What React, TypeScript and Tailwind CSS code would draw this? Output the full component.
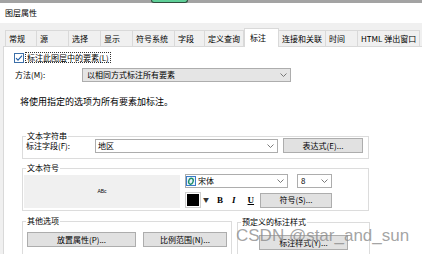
import type { ReactNode } from 'react';

type Tab = { label: string; width: string; active?: boolean };

const tabs: Tab[] = [
  { label: '常规', width: 'w-[32px]' },
  { label: '源', width: 'w-[32px]' },
  { label: '选择', width: 'w-[32px]' },
  { label: '显示', width: 'w-[32px]' },
  { label: '符号系统', width: 'w-[42px]' },
  { label: '字段', width: 'w-[30px]' },
  { label: '定义查询', width: 'w-[39px]' },
  { label: '标注', width: 'w-[35px]', active: true },
  { label: '连接和关联', width: 'w-[47px]' },
  { label: '时间', width: 'w-[32px]' },
  { label: 'HTML 弹出窗口', width: 'w-[62px]' },
];

function Chevron() {
  return (
    <svg viewBox="0 0 7 4" className="h-[4px] w-[7px]" aria-hidden="true">
      <path d="M0.5 0.5l3 3 3-3" fill="none" stroke="#6b6b6b" strokeWidth="0.9" />
    </svg>
  );
}

function Button({ children, className }: { children: ReactNode; className: string }) {
  return (
    <div
      className={`flex h-[15px] items-center justify-center border border-[#adadad] bg-[#e1e1e1] leading-[12px] ${className}`}
    >
      {children}
    </div>
  );
}

function Group({ label, className, children }: { label: string; className: string; children: ReactNode }) {
  return (
    <div className={`relative border border-[#dcdcdc] ${className}`}>
      <span className="absolute -top-[6px] left-[3px] bg-white px-px leading-[9px]">{label}</span>
      {children}
    </div>
  );
}

function FontIcon() {
  return (
    <svg viewBox="0 0 10 10" className="h-[10px] w-[10px]" aria-hidden="true">
      <rect x="0.5" y="0.5" width="9" height="9" fill="#eaf3fb" stroke="#3b7bc8" />
      <ellipse cx="5" cy="5.2" rx="2.2" ry="3" fill="none" stroke="#1d8f6a" strokeWidth="1.4" transform="rotate(18 5 5)" />
    </svg>
  );
}

export default function App() {
  return (
    <div className="relative flex h-[254px] w-[422px] flex-col overflow-hidden bg-white font-['Noto_Sans_CJK_SC',sans-serif] text-[8px] text-black">
      {/* window edge behind the dialog */}
      <div className="flex h-[3px] shrink-0 bg-[#a3a3a3]">
        <div className="ml-[151px] h-[3px] w-[37px] rounded-b-[3px] border-x border-b border-[#2f4f3f] bg-[#5fcf98]" />
      </div>

      <div className="flex h-[20px] shrink-0 items-center pl-[5px] leading-[12px]">图层属性</div>

      <div className="flex flex-1 flex-col bg-[#f0f0f0] pt-[5px]">
        <div className="flex h-[18px] items-end whitespace-nowrap pl-[5px]">
          {tabs.map((tab) =>
            tab.active ? (
              <div
                key={tab.label}
                className={`relative z-10 -mb-px h-[19px] border-x border-t border-[#d9d9d9] bg-white pl-[5px] pt-[3px] leading-[12px] ${tab.width}`}
              >
                {tab.label}
              </div>
            ) : (
              <div
                key={tab.label}
                className={`h-[16px] border-t border-r border-[#d9d9d9] pl-[3px] pt-[2px] leading-[12px] first:border-l ${tab.width}`}
              >
                {tab.label}
              </div>
            ),
          )}
        </div>

        <div className="ml-[3px] flex flex-1 flex-col border-l border-t border-[#d9d9d9] bg-white">
          <div className="ml-[10px] mt-[5px] flex h-[11px] items-center">
            <svg viewBox="0 0 10 10" className="h-[10px] w-[10px]" aria-hidden="true">
              <rect x="0.5" y="0.5" width="9" height="9" fill="#fff" stroke="#3c6fa8" />
              <path d="M2 5.2l2 2 4-4.6" fill="none" stroke="#1f5fa8" strokeWidth="1.1" />
            </svg>
            <span className="ml-px flex h-[11px] items-center border border-dotted border-[#333] px-px leading-[9px]">
              标注此图层中的要素(L)
            </span>
          </div>

          <div className="ml-[10px] mt-[5px] flex h-[14px] items-center">
            <span className="w-[68px] pl-px leading-[12px]">方法(M):</span>
            <div className="flex h-[14px] w-[209px] items-center justify-between border border-[#adadad] bg-[#e5e5e5] pl-[4px] pr-[3px]">
              <span className="leading-[12px]">以相同方式标注所有要素</span>
              <Chevron />
            </div>
          </div>

          <div className="ml-[16px] mt-[14px] text-[9px] leading-[12px]">将使用指定的选项为所有要素加标注。</div>

          <Group label="文本字符串" className="ml-[18px] mt-[28px] w-[347px] pb-[5px] pl-[3px] pt-px">
            <div className="flex h-[15px] items-center">
              <span className="w-[69px] leading-[12px]">标注字段(F):</span>
              <div className="flex h-[14px] w-[183px] items-center justify-between border border-[#adadad] bg-white pl-[2px] pr-[3px]">
                <span className="leading-[12px]">地区</span>
                <Chevron />
              </div>
              <Button className="ml-[5px] w-[80px]">表达式(E)...</Button>
            </div>
          </Group>

          <Group label="文本符号" className="ml-[18px] mt-[9px] w-[347px] pb-[2px] pl-px pt-[6px]">
            <div className="flex items-start">
              <div className="flex h-[33px] w-[156px] items-center justify-center bg-[#f0f0f0] font-['Liberation_Sans',sans-serif] text-[5px]">
                ABc
              </div>
              <div className="-mt-px ml-[5px] flex flex-col">
                <div className="flex h-[14px] items-center">
                  <div className="flex h-[14px] w-[103px] items-center border border-[#adadad] bg-white pr-[3px]">
                    <FontIcon />
                    <span className="ml-[2px] flex-1 font-['Noto_Sans_CJK_SC',serif] leading-[12px]">宋体</span>
                    <Chevron />
                  </div>
                  <div className="ml-[9px] flex h-[14px] w-[35px] items-center justify-between border border-[#adadad] bg-white pl-[3px] pr-[3px]">
                    <span className="leading-[12px]">8</span>
                    <Chevron />
                  </div>
                </div>
                <div className="mt-[4px] flex h-[16px] items-center">
                  <div className="flex h-[16px] w-[16px] items-center justify-center border border-[#cfcfcf] bg-white">
                    <div className="h-[12px] w-[12px] bg-black" />
                  </div>
                  <span className="ml-[2px] text-[6px] leading-[8px] text-[#333]">▼</span>
                  <span className="ml-[8px] font-['Liberation_Serif',serif] text-[9px] font-bold leading-[12px]">B</span>
                  <span className="ml-[9px] font-['Liberation_Serif',serif] text-[9px] font-bold italic leading-[12px]">I</span>
                  <span className="ml-[12px] font-['Liberation_Serif',serif] text-[9px] font-bold leading-[12px] underline">U</span>
                  <Button className="ml-[6px] w-[72px]">符号(S)...</Button>
                </div>
              </div>
            </div>
          </Group>

          <div className="mt-[10px] flex items-start">
            <Group label="其他选项" className="ml-[18px] h-[60px] w-[210px] pl-[4px] pt-[10px]">
              <div className="flex">
                <Button className="w-[109px]">放置属性(P)...</Button>
                <Button className="ml-[7px] w-[84px]">比例范围(N)...</Button>
              </div>
            </Group>
            <Group label="预定义的标注样式" className="ml-[5px] mt-px h-[60px] w-[133px] pl-[21px] pt-[12px]">
              <Button className="w-[89px]">标注样式(Y)...</Button>
            </Group>
          </div>
        </div>
      </div>

      {/* watermark laid over the dialog */}
      <div className="pointer-events-none absolute left-[236px] top-[225px] font-['Liberation_Sans',sans-serif] text-[17px] leading-[22px] text-[#8c8c8c]/80">
        CSDN @star_and_sun
      </div>
    </div>
  );
}
